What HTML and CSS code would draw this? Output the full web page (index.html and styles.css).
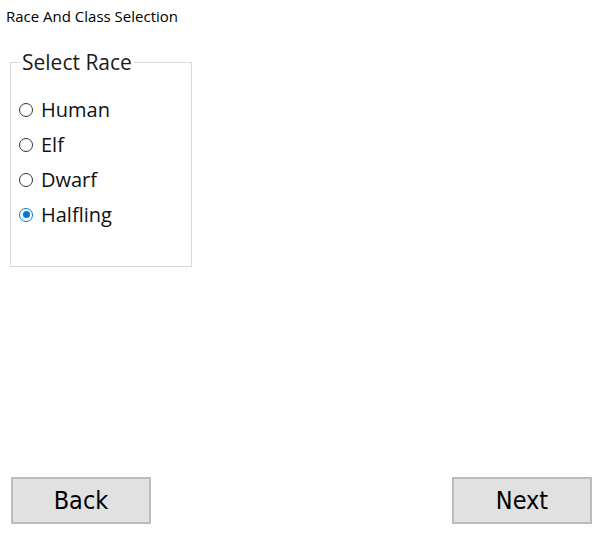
FILE: index.html
```html
<!DOCTYPE html>
<html>
<head>
<meta charset="utf-8">
<link rel="stylesheet" href="styles.css">
</head>
<body>
<div class="app">
  <div class="title">Race And Class Selection</div>
  <fieldset class="group">
    <legend class="legend">Select Race</legend>
    <label class="opt"><span class="radio"></span><span>Human</span></label>
    <label class="opt"><span class="radio"></span><span>Elf</span></label>
    <label class="opt"><span class="radio"></span><span>Dwarf</span></label>
    <label class="opt"><span class="radio checked"></span><span>Halfling</span></label>
  </fieldset>
  <div class="spacer"></div>
  <div class="buttons">
    <button class="btn">Back</button>
    <button class="btn">Next</button>
  </div>
</div>
</body>
</html>
```
FILE: styles.css
```css
html, body {
  margin: 0;
  padding: 0;
  background: #ffffff;
}
.app {
  width: 613px;
  height: 542px;
  display: flex;
  flex-direction: column;
  font-family: "Open Sans", "DejaVu Sans", sans-serif;
  color: #000;
}
.title {
  font-size: 15px;
  line-height: 19px;
  padding: 7px 0 0 6px;
  height: 19px;
}
.group {
  margin: 24px 0 0 10px;
  width: 182px;
  height: 217px;
  box-sizing: border-box;
  border: 1px solid #d9d9d9;
  padding: 18px 0 0 8px;
  display: flex;
  flex-direction: column;
  gap: 0;
}
.legend {
  font-size: 21px;
  line-height: 24px;
  padding: 0 2px;
  margin-left: 1px;
  color: #1a1a1a;
}
.opt {
  display: flex;
  align-items: center;
  height: 35px;
  font-size: 20px;
  gap: 8px;
  color: #111;
}
.radio {
  width: 14px;
  height: 14px;
  box-sizing: border-box;
  border: 1px solid #333;
  border-radius: 50%;
  background: #fff;
  position: relative;
}
.radio.checked {
  border-color: #0078d7;
}
.radio.checked::after {
  content: "";
  position: absolute;
  left: 2.5px;
  top: 2.5px;
  width: 7px;
  height: 7px;
  border-radius: 50%;
  background: #0078d7;
}
.spacer {
  flex: 1;
}
.buttons {
  display: flex;
  justify-content: space-between;
  padding: 0 21px 18px 11px;
}
.btn {
  width: 140px;
  height: 47px;
  box-sizing: border-box;
  border: 2px solid #bcbcbc;
  background: #e1e1e1;
  font-family: "DejaVu Sans Condensed", "DejaVu Sans", sans-serif;
  font-size: 25px;
  color: #000;
  padding: 0;
  margin: 0;
}
```
